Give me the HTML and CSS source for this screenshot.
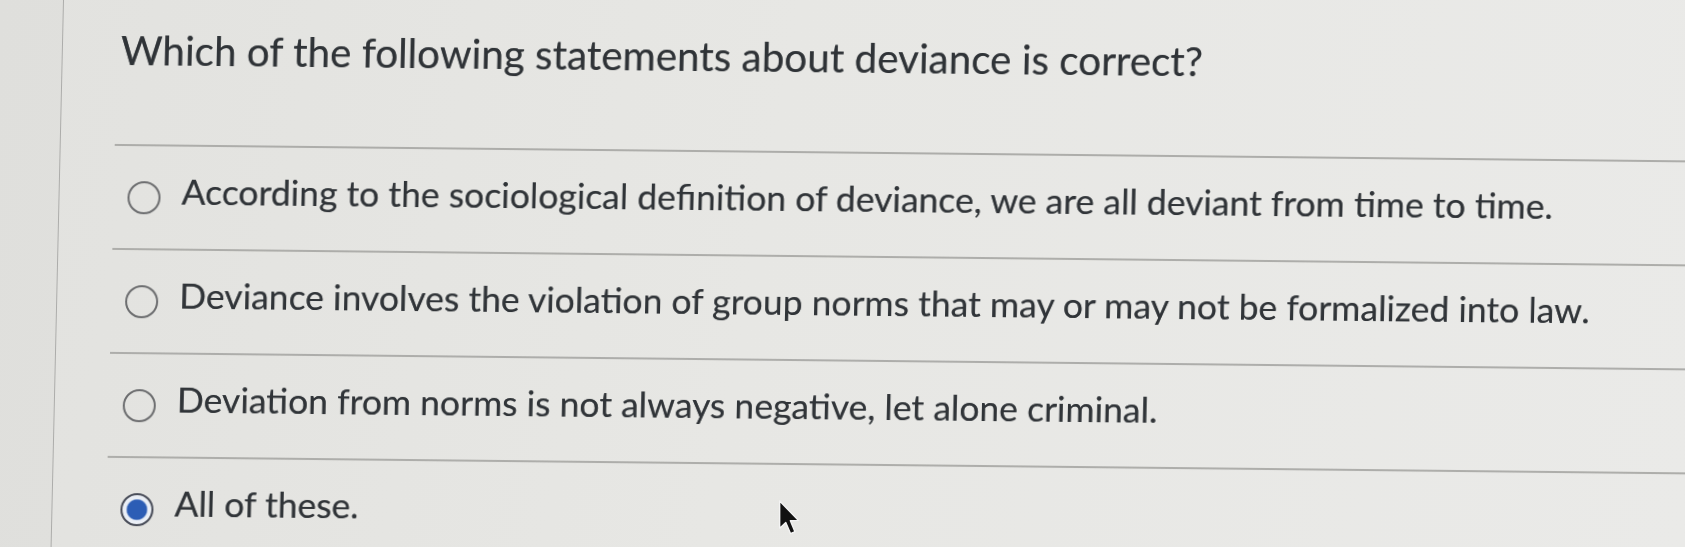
FILE: index.html
```html
<!DOCTYPE html>
<html lang="en">
<head>
<meta charset="utf-8">
<title>Quiz question</title>
<link rel="stylesheet" href="styles.css">
</head>
<body>
<div class="page">
  <div class="gutter"></div>
  <main class="quiz">
    <h1 class="question">Which of the following statements about deviance is correct?</h1>
    <ul class="answers">
      <li class="answer"><span class="radio"></span><span class="label">According to the sociological definition of deviance, we are all deviant from time to time.</span></li>
      <li class="answer"><span class="radio"></span><span class="label">Deviance involves the violation of group norms that may or may not be formalized into law.</span></li>
      <li class="answer"><span class="radio"></span><span class="label">Deviation from norms is not always negative, let alone criminal.</span></li>
      <li class="answer answer-last"><span class="radio radio-checked"></span><span class="label">All of these.</span></li>
    </ul>
  </main>
</div>
<svg class="cursor" viewBox="0 0 13 22" width="22" height="38" aria-hidden="true">
  <path d="M1 1 L1 17 L4.6 13.6 L7.4 20.2 L10 19.1 L7.3 12.6 L12 12.4 Z" fill="#111" stroke="#f4f4f4" stroke-width="0.8" stroke-linejoin="round"/>
</svg>
</body>
</html>
```
FILE: styles.css
```css
html, body {
  margin: 0;
  padding: 0;
  width: 100%;
  height: 100%;
  overflow: hidden;
}

body {
  position: relative;
  background: linear-gradient(100deg, #e2e2df 0%, #e7e7e4 45%, #eaeae8 100%);
  font-family: Lato, "Open Sans", "Liberation Sans", sans-serif;
  color: #303438;
}

.page {
  display: flex;
  width: 1740px;
  height: 600px;
  transform: rotate(0.6deg) skewX(-0.7deg);
  transform-origin: 122px 0;
  filter: blur(0.55px);
}

.gutter {
  flex: none;
  width: 63px;
  border-right: 1.5px solid #acacaa;
  background: rgba(0, 0, 0, 0.01);
}

.quiz {
  flex: 1;
  padding-left: 54px;
}

.question {
  margin: 26px 0 70px 4px;
  font-size: 40.4px;
  line-height: 48px;
  font-weight: 400;
  color: #2f3337;
  text-shadow: 0 0 0.6px rgba(40, 44, 48, 0.6);
}

.answers {
  list-style: none;
  margin: 0;
  padding: 0;
}

.answer {
  display: flex;
  align-items: flex-start;
  gap: 21px;
  padding: 23px 0 34px 14px;
  border-top: 2px solid #adadaa;
}

.answer-last {
  padding-bottom: 40px;
}

.radio {
  flex: none;
  box-sizing: border-box;
  width: 33px;
  height: 33px;
  margin-top: 12px;
  border: 2.5px solid #6c6d6f;
  border-radius: 50%;
}

.radio-checked {
  border: 2.5px solid #474b57;
  background: radial-gradient(circle, #2c5db5 0, #2c5db5 9.5px, #e9eef6 11px, #f2f4f8 100%);
}

.label {
  font-size: 35.5px;
  line-height: 44px;
  color: #303438;
  text-shadow: 0 0 0.6px rgba(40, 44, 48, 0.6);
}

.cursor {
  position: absolute;
  left: 778px;
  top: 499px;
  filter: blur(0.6px);
}
```
